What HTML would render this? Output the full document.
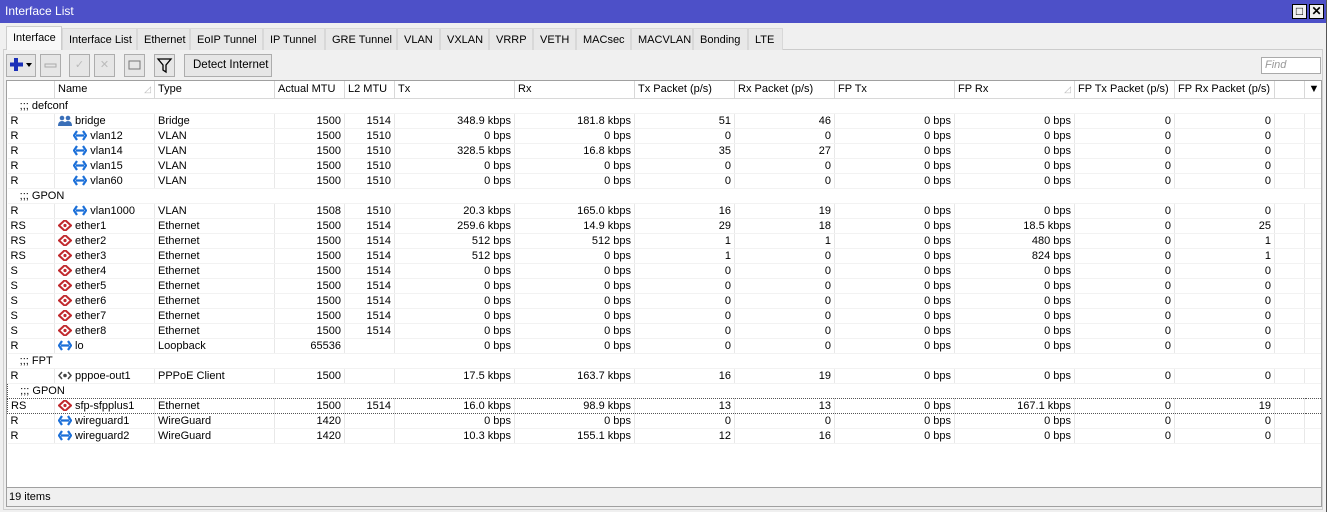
<!DOCTYPE html>
<html><head><meta charset="utf-8"><style>
*{box-sizing:border-box;margin:0;padding:0}
body{width:1330px;height:512px;background:#f0f0f0;font-family:"Liberation Sans",Arial,sans-serif;font-size:11px;color:#000;position:relative;overflow:hidden}
.title{position:absolute;left:0;top:0;width:1327px;height:23px;background:#4d50c8;color:#fff;font-size:12px;padding:4px 0 0 5px}
.wb{position:absolute;top:4px;width:15px;height:15px;background:#f0f0f0;border:1px solid #000;font-size:12px;line-height:13px;text-align:center;color:#000;font-weight:bold}
.rb{position:absolute;left:1326px;top:0;width:4px;height:512px;background:#fff;border-left:1px solid #555}
.tab{position:absolute;top:28px;height:22px;border:1px solid #d8d8d8;border-bottom:none;background:#e8e8e8;padding:5px 0 0 6px;font-size:11px}
.tab.act{background:#f8f8f8;top:26px;height:24px;border-color:#ccc;padding-top:5px}
.panel{position:absolute;left:3px;top:49px;width:1320px;height:461px;border:1px solid #d0d0d0;border-top:1px solid #ccc;background:#f0f0f0}
.btn{position:absolute;top:54px;height:23px;border:1px solid #adadad;background:#e6e6e6}
.grid{position:absolute;left:6px;top:80px;width:1316px;height:408px;background:#fff;border:1px solid #a0a0a0;overflow:hidden}
table{border-collapse:collapse;table-layout:fixed;width:1316px}
td{height:15px;padding:0 3px;white-space:nowrap;overflow:hidden;border-right:1px solid #e8e8e8;border-bottom:1px solid #f2f2f2;line-height:14px}
tr.h td{height:17px;border-right:1px solid #d8d8d8;border-bottom:1px solid #d8d8d8;background:#fff}
.r{text-align:right}
.c td{border-right:none}
.sel td{border-top:1px dotted #555;border-bottom:1px dotted #555}
svg{vertical-align:-2px;margin-right:3px}
.status{position:absolute;left:6px;top:488px;width:1316px;height:19px;border:1px solid #a0a0a0;border-top:none;background:#f0f0f0;padding:3px 0 0 2px}
</style></head><body>
<div class="title">Interface List</div>
<div class="wb" style="left:1292px">□</div><div class="wb" style="left:1309px">✕</div>
<div class="rb"></div>
<div class="panel"></div>
<div class="tab act" style="left:6px;width:56px">Interface</div>
<div class="tab" style="left:62px;width:75px">Interface List</div>
<div class="tab" style="left:137px;width:53px">Ethernet</div>
<div class="tab" style="left:190px;width:73px">EoIP Tunnel</div>
<div class="tab" style="left:263px;width:62px">IP Tunnel</div>
<div class="tab" style="left:325px;width:72px">GRE Tunnel</div>
<div class="tab" style="left:397px;width:43px">VLAN</div>
<div class="tab" style="left:440px;width:49px">VXLAN</div>
<div class="tab" style="left:489px;width:44px">VRRP</div>
<div class="tab" style="left:533px;width:43px">VETH</div>
<div class="tab" style="left:576px;width:55px">MACsec</div>
<div class="tab" style="left:631px;width:62px">MACVLAN</div>
<div class="tab" style="left:693px;width:55px">Bonding</div>
<div class="tab" style="left:748px;width:35px">LTE</div>
<div class="btn" style="left:6px;width:30px"><svg width="26" height="20" viewBox="0 0 26 20"><path d="M9 3v13M3 9.5h13" stroke="#1a2fb8" stroke-width="4"/><path d="M19 8l3 4 3-4z" fill="#000"/></svg></div>
<div class="btn" style="left:40px;width:21px"><svg width="19" height="20"><rect x="4" y="9" width="11" height="3" fill="none" stroke="#aaa"/></svg></div>
<div class="btn" style="left:69px;width:21px;color:#bbb;text-align:center;line-height:20px">✓</div>
<div class="btn" style="left:94px;width:21px;color:#bbb;text-align:center;line-height:20px">✕</div>
<div class="btn" style="left:124px;width:21px"><svg width="19" height="20"><rect x="4" y="6" width="11" height="8" fill="none" stroke="#777"/></svg></div>
<div class="btn" style="left:154px;width:21px"><svg width="19" height="20"><path d="M3 4h13l-5 6v7l-3-2v-5z" fill="none" stroke="#000" stroke-width="1.3"/></svg></div>
<div class="btn" style="left:184px;width:88px;padding:4px 0 0 8px;font-size:11.5px">Detect Internet</div>
<div style="position:absolute;left:1261px;top:57px;width:60px;height:17px;background:#fff;border:1px solid #aaa;color:#999;font-style:italic;padding:1px 3px">Find</div>
<div class="grid"><table>
<colgroup><col style="width:47px"><col style="width:100px"><col style="width:120px"><col style="width:70px"><col style="width:50px"><col style="width:120px"><col style="width:120px"><col style="width:100px"><col style="width:100px"><col style="width:120px"><col style="width:120px"><col style="width:100px"><col style="width:100px"><col style="width:30px"><col style="width:19px"></colgroup>
<tr class="h"><td></td><td>Name<span style="float:right;color:#bbb;font-size:9px">◿</span></td><td>Type</td><td>Actual MTU</td><td>L2 MTU</td><td>Tx</td><td>Rx</td><td>Tx Packet (p/s)</td><td>Rx Packet (p/s)</td><td>FP Tx</td><td>FP Rx<span style="float:right;color:#bbb;font-size:9px">◿</span></td><td>FP Tx Packet (p/s)</td><td>FP Rx Packet (p/s)</td><td></td><td style="text-align:center">▼</td></tr>
<tr class="c"><td colspan="15">&nbsp;&nbsp;&nbsp;;;; defconf</td></tr>
<tr><td>R</td><td><svg width="14" height="11"><circle cx="4" cy="3" r="2.3" fill="#3a6fb8"/><circle cx="10" cy="3" r="2.3" fill="#3a6fb8"/><path d="M0 11q0-5 4-5t4 5zM6 11q0-5 4-5t4 5z" fill="#3a6fb8"/></svg>bridge</td><td>Bridge</td><td class="r">1500</td><td class="r">1514</td><td class="r">348.9 kbps</td><td class="r">181.8 kbps</td><td class="r">51</td><td class="r">46</td><td class="r">0 bps</td><td class="r">0 bps</td><td class="r">0</td><td class="r">0</td><td></td><td></td></tr>
<tr><td>R</td><td>&nbsp;&nbsp;&nbsp;&nbsp;&nbsp;<svg width="14" height="11"><path d="M4 1L1 5.5 4 10M10 1l3 4.5L10 10M3 5.5h8" stroke="#1b6fd8" stroke-width="2.2" fill="none"/></svg>vlan12</td><td>VLAN</td><td class="r">1500</td><td class="r">1510</td><td class="r">0 bps</td><td class="r">0 bps</td><td class="r">0</td><td class="r">0</td><td class="r">0 bps</td><td class="r">0 bps</td><td class="r">0</td><td class="r">0</td><td></td><td></td></tr>
<tr><td>R</td><td>&nbsp;&nbsp;&nbsp;&nbsp;&nbsp;<svg width="14" height="11"><path d="M4 1L1 5.5 4 10M10 1l3 4.5L10 10M3 5.5h8" stroke="#1b6fd8" stroke-width="2.2" fill="none"/></svg>vlan14</td><td>VLAN</td><td class="r">1500</td><td class="r">1510</td><td class="r">328.5 kbps</td><td class="r">16.8 kbps</td><td class="r">35</td><td class="r">27</td><td class="r">0 bps</td><td class="r">0 bps</td><td class="r">0</td><td class="r">0</td><td></td><td></td></tr>
<tr><td>R</td><td>&nbsp;&nbsp;&nbsp;&nbsp;&nbsp;<svg width="14" height="11"><path d="M4 1L1 5.5 4 10M10 1l3 4.5L10 10M3 5.5h8" stroke="#1b6fd8" stroke-width="2.2" fill="none"/></svg>vlan15</td><td>VLAN</td><td class="r">1500</td><td class="r">1510</td><td class="r">0 bps</td><td class="r">0 bps</td><td class="r">0</td><td class="r">0</td><td class="r">0 bps</td><td class="r">0 bps</td><td class="r">0</td><td class="r">0</td><td></td><td></td></tr>
<tr><td>R</td><td>&nbsp;&nbsp;&nbsp;&nbsp;&nbsp;<svg width="14" height="11"><path d="M4 1L1 5.5 4 10M10 1l3 4.5L10 10M3 5.5h8" stroke="#1b6fd8" stroke-width="2.2" fill="none"/></svg>vlan60</td><td>VLAN</td><td class="r">1500</td><td class="r">1510</td><td class="r">0 bps</td><td class="r">0 bps</td><td class="r">0</td><td class="r">0</td><td class="r">0 bps</td><td class="r">0 bps</td><td class="r">0</td><td class="r">0</td><td></td><td></td></tr>
<tr class="c"><td colspan="15">&nbsp;&nbsp;&nbsp;;;; GPON</td></tr>
<tr><td>R</td><td>&nbsp;&nbsp;&nbsp;&nbsp;&nbsp;<svg width="14" height="11"><path d="M4 1L1 5.5 4 10M10 1l3 4.5L10 10M3 5.5h8" stroke="#1b6fd8" stroke-width="2.2" fill="none"/></svg>vlan1000</td><td>VLAN</td><td class="r">1508</td><td class="r">1510</td><td class="r">20.3 kbps</td><td class="r">165.0 kbps</td><td class="r">16</td><td class="r">19</td><td class="r">0 bps</td><td class="r">0 bps</td><td class="r">0</td><td class="r">0</td><td></td><td></td></tr>
<tr><td>RS</td><td><svg width="14" height="11"><path d="M7 0l6 5.5-6 5.5-6-5.5z" fill="none" stroke="#c0282c" stroke-width="2"/><circle cx="7" cy="5.5" r="1.6" fill="#c0282c"/></svg>ether1</td><td>Ethernet</td><td class="r">1500</td><td class="r">1514</td><td class="r">259.6 kbps</td><td class="r">14.9 kbps</td><td class="r">29</td><td class="r">18</td><td class="r">0 bps</td><td class="r">18.5 kbps</td><td class="r">0</td><td class="r">25</td><td></td><td></td></tr>
<tr><td>RS</td><td><svg width="14" height="11"><path d="M7 0l6 5.5-6 5.5-6-5.5z" fill="none" stroke="#c0282c" stroke-width="2"/><circle cx="7" cy="5.5" r="1.6" fill="#c0282c"/></svg>ether2</td><td>Ethernet</td><td class="r">1500</td><td class="r">1514</td><td class="r">512 bps</td><td class="r">512 bps</td><td class="r">1</td><td class="r">1</td><td class="r">0 bps</td><td class="r">480 bps</td><td class="r">0</td><td class="r">1</td><td></td><td></td></tr>
<tr><td>RS</td><td><svg width="14" height="11"><path d="M7 0l6 5.5-6 5.5-6-5.5z" fill="none" stroke="#c0282c" stroke-width="2"/><circle cx="7" cy="5.5" r="1.6" fill="#c0282c"/></svg>ether3</td><td>Ethernet</td><td class="r">1500</td><td class="r">1514</td><td class="r">512 bps</td><td class="r">0 bps</td><td class="r">1</td><td class="r">0</td><td class="r">0 bps</td><td class="r">824 bps</td><td class="r">0</td><td class="r">1</td><td></td><td></td></tr>
<tr><td>S</td><td><svg width="14" height="11"><path d="M7 0l6 5.5-6 5.5-6-5.5z" fill="none" stroke="#c0282c" stroke-width="2"/><circle cx="7" cy="5.5" r="1.6" fill="#c0282c"/></svg>ether4</td><td>Ethernet</td><td class="r">1500</td><td class="r">1514</td><td class="r">0 bps</td><td class="r">0 bps</td><td class="r">0</td><td class="r">0</td><td class="r">0 bps</td><td class="r">0 bps</td><td class="r">0</td><td class="r">0</td><td></td><td></td></tr>
<tr><td>S</td><td><svg width="14" height="11"><path d="M7 0l6 5.5-6 5.5-6-5.5z" fill="none" stroke="#c0282c" stroke-width="2"/><circle cx="7" cy="5.5" r="1.6" fill="#c0282c"/></svg>ether5</td><td>Ethernet</td><td class="r">1500</td><td class="r">1514</td><td class="r">0 bps</td><td class="r">0 bps</td><td class="r">0</td><td class="r">0</td><td class="r">0 bps</td><td class="r">0 bps</td><td class="r">0</td><td class="r">0</td><td></td><td></td></tr>
<tr><td>S</td><td><svg width="14" height="11"><path d="M7 0l6 5.5-6 5.5-6-5.5z" fill="none" stroke="#c0282c" stroke-width="2"/><circle cx="7" cy="5.5" r="1.6" fill="#c0282c"/></svg>ether6</td><td>Ethernet</td><td class="r">1500</td><td class="r">1514</td><td class="r">0 bps</td><td class="r">0 bps</td><td class="r">0</td><td class="r">0</td><td class="r">0 bps</td><td class="r">0 bps</td><td class="r">0</td><td class="r">0</td><td></td><td></td></tr>
<tr><td>S</td><td><svg width="14" height="11"><path d="M7 0l6 5.5-6 5.5-6-5.5z" fill="none" stroke="#c0282c" stroke-width="2"/><circle cx="7" cy="5.5" r="1.6" fill="#c0282c"/></svg>ether7</td><td>Ethernet</td><td class="r">1500</td><td class="r">1514</td><td class="r">0 bps</td><td class="r">0 bps</td><td class="r">0</td><td class="r">0</td><td class="r">0 bps</td><td class="r">0 bps</td><td class="r">0</td><td class="r">0</td><td></td><td></td></tr>
<tr><td>S</td><td><svg width="14" height="11"><path d="M7 0l6 5.5-6 5.5-6-5.5z" fill="none" stroke="#c0282c" stroke-width="2"/><circle cx="7" cy="5.5" r="1.6" fill="#c0282c"/></svg>ether8</td><td>Ethernet</td><td class="r">1500</td><td class="r">1514</td><td class="r">0 bps</td><td class="r">0 bps</td><td class="r">0</td><td class="r">0</td><td class="r">0 bps</td><td class="r">0 bps</td><td class="r">0</td><td class="r">0</td><td></td><td></td></tr>
<tr><td>R</td><td><svg width="14" height="11"><path d="M4 1L1 5.5 4 10M10 1l3 4.5L10 10M3 5.5h8" stroke="#1b6fd8" stroke-width="2.2" fill="none"/></svg>lo</td><td>Loopback</td><td class="r">65536</td><td class="r"></td><td class="r">0 bps</td><td class="r">0 bps</td><td class="r">0</td><td class="r">0</td><td class="r">0 bps</td><td class="r">0 bps</td><td class="r">0</td><td class="r">0</td><td></td><td></td></tr>
<tr class="c"><td colspan="15">&nbsp;&nbsp;&nbsp;;;; FPT</td></tr>
<tr><td>R</td><td><svg width="14" height="11"><path d="M4 2L1 5.5 4 9M10 2l3 3.5L10 9" stroke="#444" stroke-width="1.5" fill="none"/><circle cx="7" cy="5.5" r="1.8" fill="#444"/></svg>pppoe-out1</td><td>PPPoE Client</td><td class="r">1500</td><td class="r"></td><td class="r">17.5 kbps</td><td class="r">163.7 kbps</td><td class="r">16</td><td class="r">19</td><td class="r">0 bps</td><td class="r">0 bps</td><td class="r">0</td><td class="r">0</td><td></td><td></td></tr>
<tr class="c sel"><td colspan="15" style="border-left:1px dotted #555">&nbsp;&nbsp;&nbsp;;;; GPON</td></tr>
<tr class="sel"><td style="border-left:1px dotted #555">RS</td><td><svg width="14" height="11"><path d="M7 0l6 5.5-6 5.5-6-5.5z" fill="none" stroke="#c0282c" stroke-width="2"/><circle cx="7" cy="5.5" r="1.6" fill="#c0282c"/></svg>sfp-sfpplus1</td><td>Ethernet</td><td class="r">1500</td><td class="r">1514</td><td class="r">16.0 kbps</td><td class="r">98.9 kbps</td><td class="r">13</td><td class="r">13</td><td class="r">0 bps</td><td class="r">167.1 kbps</td><td class="r">0</td><td class="r">19</td><td></td><td></td></tr>
<tr><td>R</td><td><svg width="14" height="11"><path d="M4 1L1 5.5 4 10M10 1l3 4.5L10 10M3 5.5h8" stroke="#1b6fd8" stroke-width="2.2" fill="none"/></svg>wireguard1</td><td>WireGuard</td><td class="r">1420</td><td class="r"></td><td class="r">0 bps</td><td class="r">0 bps</td><td class="r">0</td><td class="r">0</td><td class="r">0 bps</td><td class="r">0 bps</td><td class="r">0</td><td class="r">0</td><td></td><td></td></tr>
<tr><td>R</td><td><svg width="14" height="11"><path d="M4 1L1 5.5 4 10M10 1l3 4.5L10 10M3 5.5h8" stroke="#1b6fd8" stroke-width="2.2" fill="none"/></svg>wireguard2</td><td>WireGuard</td><td class="r">1420</td><td class="r"></td><td class="r">10.3 kbps</td><td class="r">155.1 kbps</td><td class="r">12</td><td class="r">16</td><td class="r">0 bps</td><td class="r">0 bps</td><td class="r">0</td><td class="r">0</td><td></td><td></td></tr>
</table></div>
<div class="status">19 items</div>
</body></html>
